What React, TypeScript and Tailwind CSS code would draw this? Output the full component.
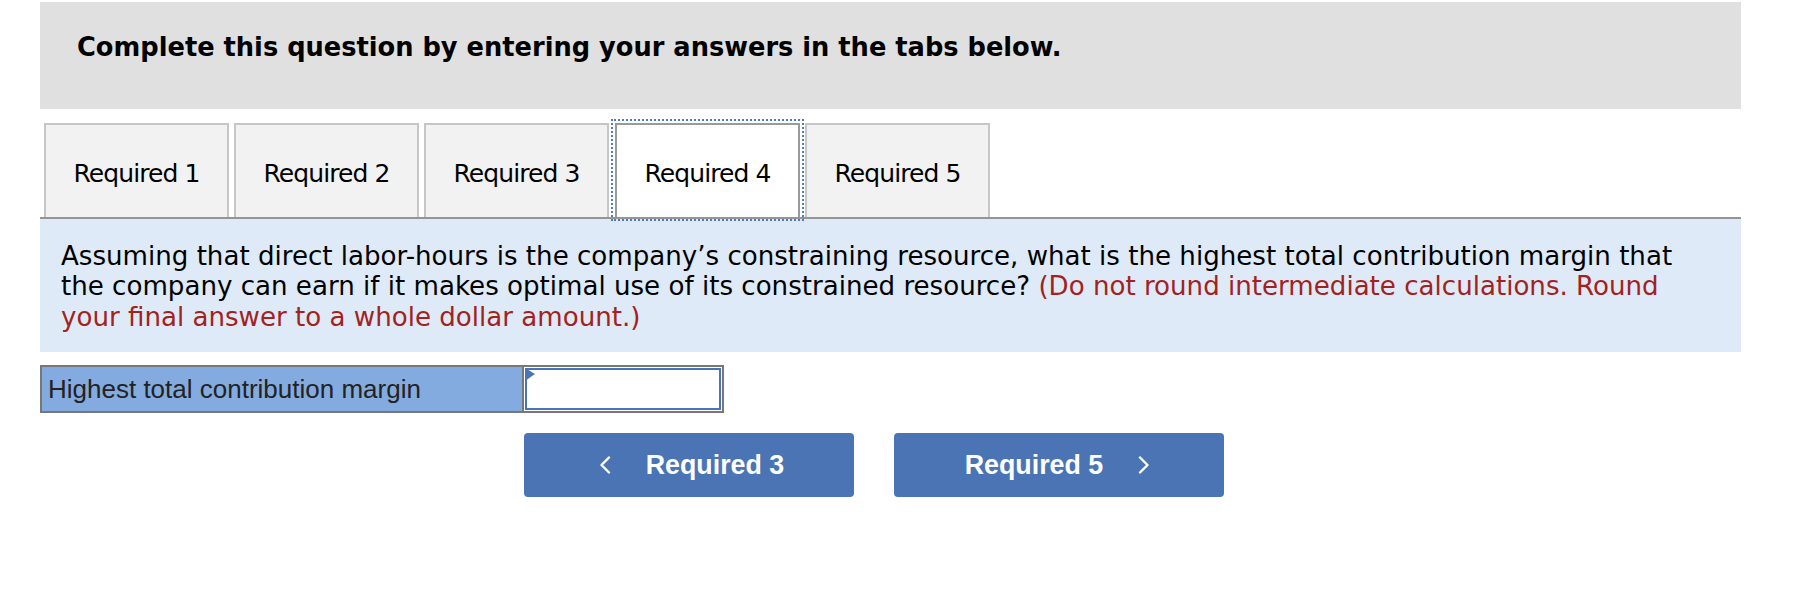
import React from "react";

function ChevronLeft() {
  return (
    <svg width="12" height="18" viewBox="0 0 12 18" fill="none">
      <polyline points="10,1.5 2.5,9 10,16.5" stroke="white" strokeWidth="2.4" strokeLinecap="round" strokeLinejoin="round" />
    </svg>
  );
}

function ChevronRight() {
  return (
    <svg width="12" height="18" viewBox="0 0 12 18" fill="none">
      <polyline points="2,1.5 9.5,9 2,16.5" stroke="white" strokeWidth="2.4" strokeLinecap="round" strokeLinejoin="round" />
    </svg>
  );
}

const tabs = ["Required 1", "Required 2", "Required 3", "Required 4", "Required 5"];

export default function App() {
  return (
    <div className="w-[1806px] h-[594px] bg-white overflow-hidden">
      <div className="ml-[40px] w-[1701px] pt-[2px]">
        <div className="h-[107px] bg-[#e0e0e0] pl-[37px] pt-[30px]">
          <div className="font-['DejaVu_Sans',Verdana,sans-serif] font-bold text-[25.7px] leading-[30px] text-black whitespace-nowrap">
            Complete this question by entering your answers in the tabs below.
          </div>
        </div>

        <div className="mt-[14px] flex gap-[5px] pl-[4px] border-b-2 border-[#959595]">
          {tabs.map((t, i) =>
            i === 3 ? (
              <div
                key={t}
                className="relative h-[94px] w-[185px] ml-[1px] pt-[6px] bg-white border-2 border-b-0 border-[#9a9a9a] outline-2 outline-dotted outline-[#4a7cc8] outline-offset-[2px] flex items-center justify-center font-['DejaVu_Sans',Verdana,sans-serif] text-[25px] tracking-[-0.9px] text-black"
              >
                {t}
              </div>
            ) : (
              <div
                key={t}
                className="h-[94px] w-[185px] pt-[6px] bg-[#f2f2f2] border-2 border-b-0 border-[#c6c6c6] flex items-center justify-center font-['DejaVu_Sans',Verdana,sans-serif] text-[25px] tracking-[-0.9px] text-black"
              >
                {t}
              </div>
            )
          )}
        </div>

        <div className="bg-[#deeaf7] pl-[21px] pt-[22px] pb-[20px] font-['DejaVu_Sans',Verdana,sans-serif] text-[26.1px] leading-[30.4px] text-black whitespace-nowrap">
          Assuming that direct labor-hours is the company’s constraining resource, what is the highest total contribution margin that
          <br />
          the company can earn if it makes optimal use of its constrained resource?{" "}
          <span className="text-[#a3221e]">
            (Do not round intermediate calculations. Round
            <br />
            your final answer to a whole dollar amount.)
          </span>
        </div>

        <div className="mt-[13px] inline-flex border-2 border-[#777777] h-[48px]">
          <div className="w-[482px] bg-[#84abe0] border-r-2 border-[#777777] pl-[6px] flex items-center font-['Liberation_Sans',Arial,sans-serif] text-[26px] text-[#222222] whitespace-nowrap">
            Highest total contribution margin
          </div>
          <div className="relative w-[198px] bg-white p-[1px]">
            <div className="h-full w-full border-2 border-[#4a74b5] bg-white" />
            <svg className="absolute left-[1px] top-[1px]" width="11" height="14" viewBox="0 0 11 14">
              <polygon points="0,0 10,6 0,13" fill="#4a74b5" />
            </svg>
          </div>
        </div>

        <div className="mt-[20px] flex gap-[40px] pl-[484px]">
          <button className="h-[64px] w-[330px] rounded-[4px] bg-[#4a74b3] pl-[5px] flex items-center justify-center gap-[35px] font-['Liberation_Sans',Arial,sans-serif] font-bold text-[26.8px] text-white">
            <ChevronLeft />
            <span>Required 3</span>
          </button>
          <button className="h-[64px] w-[330px] rounded-[4px] bg-[#4a74b3] pr-[3px] flex items-center justify-center gap-[35px] font-['Liberation_Sans',Arial,sans-serif] font-bold text-[26.8px] text-white">
            <span>Required 5</span>
            <ChevronRight />
          </button>
        </div>
      </div>
    </div>
  );
}
